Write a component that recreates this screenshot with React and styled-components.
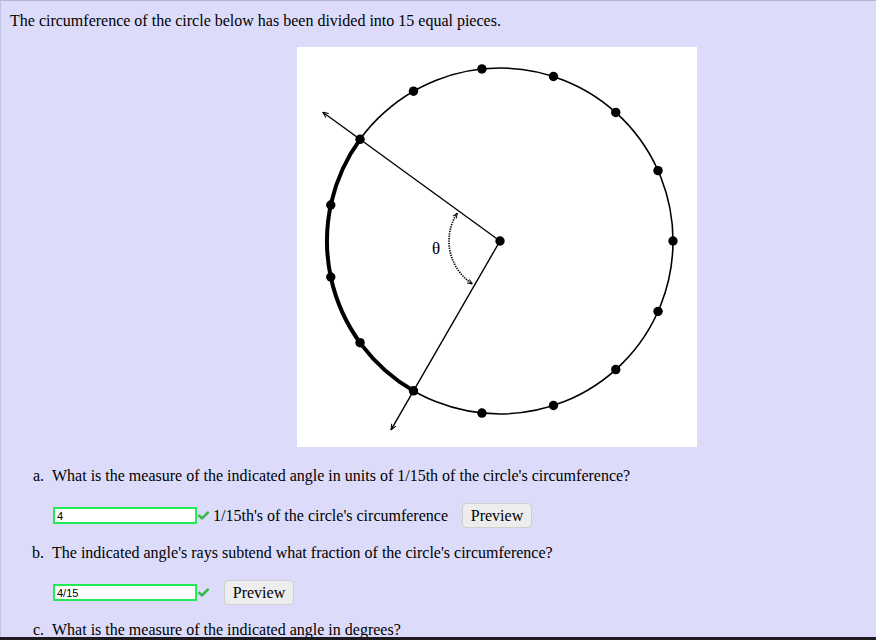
import styled, { createGlobalStyle } from "styled-components";

const GlobalStyle = createGlobalStyle`
  html, body {
    margin: 0;
    padding: 0;
    background: #1d1b20;
  }
  body {
    font-family: "Liberation Serif", "Times New Roman", serif;
    font-size: 16px;
    color: #000;
  }
`;

// figure geometry
const CX = 203;
const CY = 194;
const R = 173;
const pt = (deg, r = R) => {
  const a = (deg * Math.PI) / 180;
  return [CX + r * Math.cos(a), CY - r * Math.sin(a)];
};

const CircleFigure = () => {
  const dots = Array.from({ length: 15 }, (_, i) => pt(i * 24));
  const [ax, ay] = pt(144);
  const [bx, by] = pt(240);
  const [r1x, r1y] = pt(144, 219);
  const [r2x, r2y] = pt(240, 218);
  const [s1x, s1y] = pt(147, 51);
  const [s2x, s2y] = pt(237, 51);
  return (
    <svg width="400" height="400" viewBox="0 0 400 400">
      <defs>
        <marker
          id="tip"
          viewBox="0 0 10 10"
          refX="9"
          refY="5"
          markerWidth="7"
          markerHeight="7"
          orient="auto-start-reverse"
          markerUnits="userSpaceOnUse"
        >
          <path d="M1 1.5 L9 5 L1 8.5" fill="none" stroke="#000" strokeWidth="1.5" />
        </marker>
        <marker
          id="small"
          viewBox="0 0 10 10"
          refX="9"
          refY="5"
          markerWidth="6"
          markerHeight="6"
          orient="auto-start-reverse"
          markerUnits="userSpaceOnUse"
        >
          <path d="M1 1.5 L9 5 L1 8.5" fill="none" stroke="#000" strokeWidth="1.6" />
        </marker>
      </defs>
      <circle cx={CX} cy={CY} r={R} fill="none" stroke="#000" strokeWidth="1.6" />
      <path
        d={`M${ax} ${ay} A${R} ${R} 0 0 0 ${bx} ${by}`}
        fill="none"
        stroke="#000"
        strokeWidth="4"
      />
      <line x1={CX} y1={CY} x2={r1x} y2={r1y} stroke="#000" strokeWidth="1.4" markerEnd="url(#tip)" />
      <line x1={CX} y1={CY} x2={r2x} y2={r2y} stroke="#000" strokeWidth="1.4" markerEnd="url(#tip)" />
      <path
        d={`M${s1x} ${s1y} A51 51 0 0 0 ${s2x} ${s2y}`}
        fill="none"
        stroke="#000"
        strokeWidth="1.7"
        strokeDasharray="1.3 1.1"
        markerStart="url(#small)"
        markerEnd="url(#small)"
      />
      {dots.map(([x, y], i) => (
        <circle key={i} cx={x} cy={y} r="4.7" fill="#000" />
      ))}
      <circle cx={CX} cy={CY} r="4.7" fill="#000" />
      <text
        x="139"
        y="207"
        textAnchor="middle"
        fontFamily="Liberation Serif, serif"
        fontSize="17"
      >
        θ
      </text>
    </svg>
  );
};

const CheckMark = () => (
  <svg width="11" height="9" viewBox="0 0 11 9">
    <path
      d="M1.2 4.8 L4 7.4 L9.8 1.6"
      fill="none"
      stroke="#39b64c"
      strokeWidth="2.6"
      strokeLinecap="round"
      strokeLinejoin="round"
    />
  </svg>
);

const App = () => (
  <>
    <GlobalStyle />
    <Page>
      <Problem>
        <Intro>
          The circumference of the circle below has been divided into 15 equal pieces.
        </Intro>
        <Figure>
          <CircleFigure />
        </Figure>
        <Parts>
          <Part>
            <Question>
              What is the measure of the indicated angle in units of 1/15th of the
              circle's circumference?
            </Question>
            <AnswerRow>
              <AnswerInput defaultValue="4" readOnly />
              <CheckMark />
              <Unit>1/15th's of the circle's circumference</Unit>
              <PreviewButton>Preview</PreviewButton>
            </AnswerRow>
          </Part>
          <Part>
            <Question>
              The indicated angle's rays subtend what fraction of the circle's
              circumference?
            </Question>
            <AnswerRow>
              <AnswerInput defaultValue="4/15" readOnly />
              <CheckMark />
              <PreviewButton $gap={15}>Preview</PreviewButton>
            </AnswerRow>
          </Part>
          <Part>
            <Question>What is the measure of the indicated angle in degrees?</Question>
          </Part>
        </Parts>
      </Problem>
    </Page>
  </>
);

const Page = styled.div`
  height: 637px;
  overflow: hidden;
`;

const Problem = styled.div`
  min-height: 100%;
  box-sizing: border-box;
  background: #dcdcfa;
  border-top: 1px solid #b2b2d2;
  border-left: 1px solid #c2c2e2;
  padding: 10px 0 0 9px;
`;

const Intro = styled.p`
  margin: 0;
  line-height: 20px;
`;

const Figure = styled.div`
  margin: 16px 0 0 287px;
  width: 400px;
  height: 400px;
  background: #fff;

  svg {
    display: block;
  }
`;

const Parts = styled.ol`
  list-style: lower-alpha;
  margin: 0;
  padding-left: 42px;
`;

const Part = styled.li`
  margin-top: 19px;

  &::marker {
    content: counter(list-item, lower-alpha) ".\\00a0\\00a0";
  }

  & + & {
    margin-top: 15px;
  }
`;

const Question = styled.div`
  line-height: 20px;
`;

const AnswerRow = styled.div`
  display: flex;
  align-items: center;
  height: 25px;
  margin-top: 17px;
  padding-left: 1px;
`;

const AnswerInput = styled.input`
  box-sizing: border-box;
  width: 144px;
  height: 17px;
  margin: 0 1px 0 0;
  padding: 0 2px;
  border: 2px solid #22ec55;
  background: #fff;
  font-family: "Liberation Sans", Arial, sans-serif;
  font-size: 11px;
  color: #000;
  outline: none;
`;

const Unit = styled.span`
  margin-left: 4px;
  line-height: 20px;
`;

const PreviewButton = styled.button`
  box-sizing: border-box;
  height: 25px;
  width: 70px;
  margin-left: ${(p) => p.$gap ?? 14}px;
  padding: 0;
  border: 1px solid #cfcfcf;
  border-radius: 4px;
  background: #ededed;
  font-family: "Liberation Serif", "Times New Roman", serif;
  font-size: 16px;
  color: #000;
`;

export default App;
